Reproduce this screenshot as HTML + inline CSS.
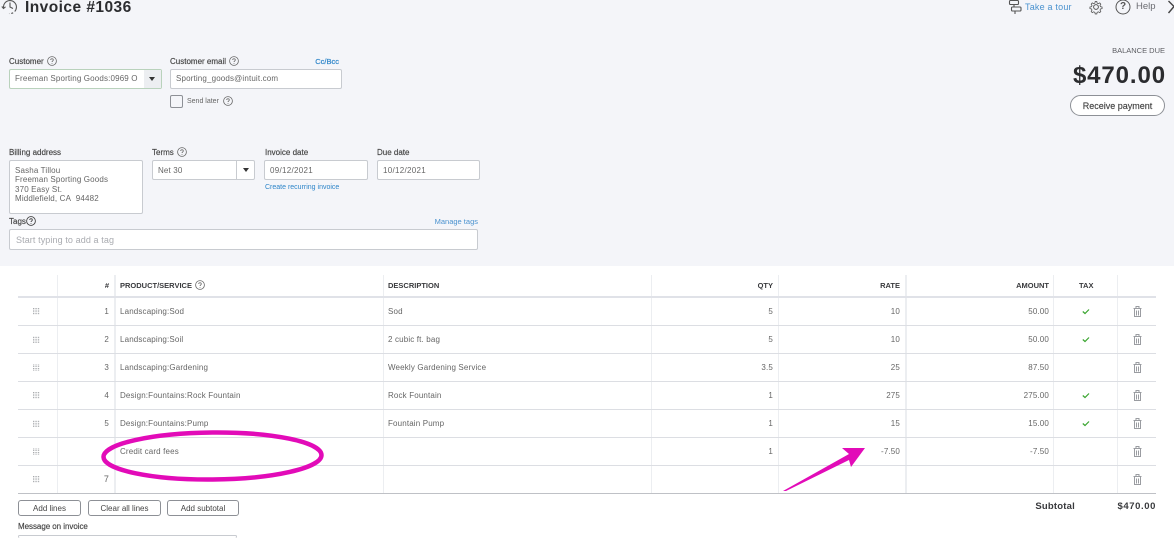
<!DOCTYPE html>
<html lang="en"><head><meta charset="utf-8"><title>Invoice #1036</title>
<style>
html,body{margin:0;padding:0;overflow:hidden;width:1174px;height:538px}
body{background:#fff;position:relative;font-family:"Liberation Sans",sans-serif;font-size:8px;color:#555}
#page{position:absolute;left:0;top:0;width:1174px;height:538px;overflow:hidden}
#top{position:absolute;left:0;top:0;width:1174px;height:266px;background:#f4f5f9}
.t{position:absolute;white-space:nowrap;line-height:10px;margin-top:1px}
.r{text-align:right}
.l{font-size:8px;color:#444;-webkit-text-stroke:.15px #444}
.h{font-size:7.5px;font-weight:bold;color:#393a3d}
.c{color:#666;font-size:8px;letter-spacing:.15px}
.b{color:#2d85c9}
.box{position:absolute;background:#fff;border:1px solid #c8cbd0;box-sizing:border-box;border-radius:2px}
.btn{position:absolute;top:500px;height:16px;background:#fff;border:1px solid #8d9096;box-sizing:border-box;border-radius:3px;text-align:center;line-height:15px;font-size:8px;color:#444}
.v{position:absolute;width:1px;top:275px;height:218px;background:#eceef1}
.hl{position:absolute;left:18px;width:1138px;height:1px;background:#dcdee3}
svg{position:absolute;overflow:visible}
</style></head><body>
<div id="page">
<div id="top"></div>

<svg style="left:1px;top:0" width="16" height="14" viewBox="0 0 16 14" fill="none" stroke="#555" stroke-width="1.1"><path d="M2.5 8A6.5 6.5 0 1 1 8 13.5" stroke-dasharray="26 2 2 2"/><path d="M9 2.5V7l3 1.5"/><path d="M.8 6.5 2.5 8.500 4.500 6.800"/></svg>
<div class="t" style="left:25px;top:-2px;font-size:15.5px;line-height:18px;font-weight:bold;color:#2b2c2f;letter-spacing:.45px">Invoice #1036</div>

<svg style="left:1008px;top:0" width="15" height="14" viewBox="0 0 15 14" fill="none" stroke="#555" stroke-width="1.1"><rect x="1.5" y=".5" width="9" height="4" rx="1"/><rect x="3.5" y="7" width="9.5" height="4" rx="1"/><path d="M6 4.500V7M7 11v3"/></svg>
<div class="t b" style="left:1025px;top:1px;font-size:9px;color:#4a92cf;letter-spacing:.2px">Take a tour</div>
<svg style="left:1088px;top:-1px" width="16" height="16" viewBox="0 0 16 16" fill="none" stroke="#555" stroke-width="1"><circle cx="8" cy="8" r="2.4"/><path d="M7 1.200h2l.4 2 1.500.7 1.800-1 1.300 1.500-1 1.700.6 1.400 2 .5v2l-2 .5-.6 1.400 1 1.700-1.300 1.400-1.800-1-1.500.7-.4 2H7l-.4-2-1.500-.7-1.800 1-1.300-1.400 1-1.700-.6-1.400-2-.5v-2l2-.5.6-1.400-1-1.700 1.300-1.500 1.800 1 1.500-.7z" transform="translate(1.600 1.600) scale(.8)"/></svg>
<svg style="left:1115px;top:-1px" width="16" height="16" viewBox="0 0 16 16" fill="none" stroke="#555" stroke-width="1"><circle cx="8" cy="8" r="7"/></svg>
<div class="t" style="left:1115px;top:1px;width:16px;text-align:center;font-size:10px;font-weight:bold;color:#555">?</div>
<div class="t" style="left:1136px;top:1px;font-size:9.5px;color:#6b6c72">Help</div>
<svg style="left:1168px;top:0" width="6" height="14" fill="none" stroke="#444" stroke-width="1.4"><path d="M.5 1 6 6.500.5 13"/></svg>

<div class="t l" style="left:9px;top:56px">Customer</div>
<svg style="left:47px;top:56px" width="10" height="10" fill="none" stroke="#666" stroke-width=".8"><circle cx="5" cy="5" r="4.400"/><path d="M3.700 4c0-1.700 2.600-1.700 2.600 0 0 1-1.300 1-1.300 2M5 7v.7"/></svg>
<div class="t l" style="left:170px;top:56px">Customer email</div>
<svg style="left:229px;top:56px" width="10" height="10" fill="none" stroke="#666" stroke-width=".8"><circle cx="5" cy="5" r="4.400"/><path d="M3.700 4c0-1.700 2.600-1.700 2.600 0 0 1-1.300 1-1.300 2M5 7v.7"/></svg>
<div class="t r b" style="right:835px;top:56px;font-size:7.5px;-webkit-text-stroke:.2px #2d85c9">Cc/Bcc</div>

<div class="box" style="left:9px;top:69px;width:153px;height:20px;border-color:#b9d2bc"></div>
<div style="position:absolute;left:144px;top:70px;width:17px;height:18px;background:#eceef1"></div>
<div class="t c" style="left:15px;top:73px">Freeman Sporting Goods:0969 O</div>
<svg style="left:149px;top:77px" width="6" height="4"><path d="M0 0h6L3 4z" fill="#333"/></svg>
<div class="box" style="left:170px;top:69px;width:172px;height:20px"></div>
<div class="t c" style="left:176px;top:73px">Sporting_goods@intuit.com</div>
<div class="box" style="left:170px;top:95px;width:13px;height:13px;background:#f4f5f9;border-color:#8d9096"></div>
<div class="t" style="left:187px;top:96px;font-size:7px;color:#666">Send later</div>
<svg style="left:223px;top:96px" width="10" height="10" fill="none" stroke="#666" stroke-width=".8"><circle cx="5" cy="5" r="4.400"/><path d="M3.700 4c0-1.700 2.600-1.700 2.600 0 0 1-1.300 1-1.300 2M5 7v.7"/></svg>

<div class="t r" style="right:9px;top:45px;font-size:7.5px;color:#5d5e63">BALANCE DUE</div>
<div class="t r" style="right:8px;top:61px;font-size:24px;line-height:27px;font-weight:bold;color:#2b2c2f;letter-spacing:.9px">$470.00</div>
<div style="position:absolute;left:1070px;top:95px;width:95px;height:21px;box-sizing:border-box;border:1px solid #8d9096;border-radius:11px;background:#fff;text-align:center;line-height:20px;font-size:9px;color:#444;-webkit-text-stroke:.15px #444">Receive payment</div>

<div class="t l" style="left:9px;top:147px">Billing address</div>
<div class="box" style="left:9px;top:160px;width:134px;height:54px"></div>
<div class="t c" style="left:15px;top:165px;line-height:9.3px">Sasha Tillou<br>Freeman Sporting Goods<br>370 Easy St.<br>Middlefield, CA&nbsp; 94482</div>
<div class="t l" style="left:152px;top:147px">Terms</div>
<svg style="left:177px;top:147px" width="10" height="10" fill="none" stroke="#666" stroke-width=".8"><circle cx="5" cy="5" r="4.400"/><path d="M3.700 4c0-1.700 2.600-1.700 2.600 0 0 1-1.300 1-1.300 2M5 7v.7"/></svg>
<div class="box" style="left:152px;top:160px;width:103px;height:20px"></div>
<div style="position:absolute;left:236px;top:161px;width:1px;height:18px;background:#c8cbd0"></div>
<div class="t c" style="left:158px;top:165px">Net 30</div>
<svg style="left:243px;top:168px" width="6" height="4"><path d="M0 0h6L3 4z" fill="#333"/></svg>
<div class="t l" style="left:265px;top:147px">Invoice date</div>
<div class="box" style="left:264px;top:160px;width:104px;height:20px"></div>
<div class="t c" style="left:270px;top:165px;letter-spacing:.3px">09/12/2021</div>
<div class="t b" style="left:265px;top:182px;font-size:7px">Create recurring invoice</div>
<div class="t l" style="left:377px;top:147px">Due date</div>
<div class="box" style="left:377px;top:160px;width:103px;height:20px"></div>
<div class="t c" style="left:383px;top:165px;letter-spacing:.3px">10/12/2021</div>
<div class="t l" style="left:9px;top:216px">Tags</div>
<svg style="left:26px;top:216px" width="10" height="10" fill="none" stroke="#444" stroke-width=".9"><circle cx="5" cy="5" r="4.400"/><path d="M3.700 4c0-1.700 2.600-1.700 2.600 0 0 1-1.300 1-1.300 2M5 7v.7"/></svg>
<div class="t r b" style="right:696px;top:216px;font-size:7.5px;color:#4a92cf">Manage tags</div>
<div class="box" style="left:9px;top:229px;width:469px;height:21px"></div>
<div class="t" style="left:16px;top:234px;font-size:9px;letter-spacing:.1px;color:#a9abb0">Start typing to add a tag</div>

<div class="v" style="left:57px"></div><div class="v" style="left:114px;width:2px"></div><div class="v" style="left:383px"></div><div class="v" style="left:651px"></div><div class="v" style="left:778px"></div><div class="v" style="left:905px;width:2px"></div><div class="v" style="left:1053px"></div><div class="v" style="left:1117px"></div>
<div class="hl" style="top:296px;height:2px;background:#e0e2e8"></div>
<div class="hl" style="top:325px"></div><div class="hl" style="top:353px"></div><div class="hl" style="top:381px"></div><div class="hl" style="top:409px"></div><div class="hl" style="top:437px"></div><div class="hl" style="top:465px"></div>
<div class="hl" style="top:493px;background:#bfc1c6"></div>

<div class="t h r" style="right:1065px;top:280px">#</div>
<div class="t h" style="left:120px;top:280px">PRODUCT/SERVICE</div>
<svg style="left:195px;top:280px" width="10" height="10" fill="none" stroke="#666" stroke-width=".8"><circle cx="5" cy="5" r="4.400"/><path d="M3.700 4c0-1.700 2.600-1.700 2.600 0 0 1-1.300 1-1.300 2M5 7v.7"/></svg>
<div class="t h" style="left:388px;top:280px">DESCRIPTION</div>
<div class="t h r" style="right:401px;top:280px">QTY</div>
<div class="t h r" style="right:274px;top:280px">RATE</div>
<div class="t h r" style="right:125px;top:280px">AMOUNT</div>
<div class="t h" style="left:1079px;top:280px">TAX</div>

<svg style="left:33px;top:308px" width="7" height="174" fill="#a5a7ab"><defs><pattern id="g" width="2.400" height="2.400" patternUnits="userSpaceOnUse"><rect width="1.300" height="1.300"/></pattern></defs><rect width="7" height="7" fill="url(#g)"/><rect y="28" width="7" height="7" fill="url(#g)"/><rect y="56" width="7" height="7" fill="url(#g)"/><rect y="84" width="7" height="7" fill="url(#g)"/><rect y="112" width="7" height="7" fill="url(#g)"/><rect y="140" width="7" height="7" fill="url(#g)"/><rect y="168" width="7" height="7" fill="url(#g)"/></svg>

<div class="t c r" style="right:1065px;top:306px">1</div><div class="t c" style="left:120px;top:306px">Landscaping:Sod</div><div class="t c" style="left:388px;top:306px">Sod</div><div class="t c r" style="right:401px;top:306px">5</div><div class="t c r" style="right:274px;top:306px">10</div><div class="t c r" style="right:125px;top:306px">50.00</div>
<div class="t c r" style="right:1065px;top:334px">2</div><div class="t c" style="left:120px;top:334px">Landscaping:Soil</div><div class="t c" style="left:388px;top:334px">2 cubic ft. bag</div><div class="t c r" style="right:401px;top:334px">5</div><div class="t c r" style="right:274px;top:334px">10</div><div class="t c r" style="right:125px;top:334px">50.00</div>
<div class="t c r" style="right:1065px;top:362px">3</div><div class="t c" style="left:120px;top:362px">Landscaping:Gardening</div><div class="t c" style="left:388px;top:362px">Weekly Gardening Service</div><div class="t c r" style="right:401px;top:362px">3.5</div><div class="t c r" style="right:274px;top:362px">25</div><div class="t c r" style="right:125px;top:362px">87.50</div>
<div class="t c r" style="right:1065px;top:390px">4</div><div class="t c" style="left:120px;top:390px">Design:Fountains:Rock Fountain</div><div class="t c" style="left:388px;top:390px">Rock Fountain</div><div class="t c r" style="right:401px;top:390px">1</div><div class="t c r" style="right:274px;top:390px">275</div><div class="t c r" style="right:125px;top:390px">275.00</div>
<div class="t c r" style="right:1065px;top:418px">5</div><div class="t c" style="left:120px;top:418px">Design:Fountains:Pump</div><div class="t c" style="left:388px;top:418px">Fountain Pump</div><div class="t c r" style="right:401px;top:418px">1</div><div class="t c r" style="right:274px;top:418px">15</div><div class="t c r" style="right:125px;top:418px">15.00</div>
<div class="t c" style="left:120px;top:446px">Credit card fees</div><div class="t c r" style="right:401px;top:446px">1</div><div class="t c r" style="right:274px;top:446px">-7.50</div><div class="t c r" style="right:125px;top:446px">-7.50</div>
<div class="t c r" style="right:1065px;top:473px;font-size:9px">7</div>

<svg style="left:1082px;top:308px" width="8" height="120" fill="none" stroke="#3aa52f" stroke-width="1.2"><path d="M.8 3.500 3 5.500 7 1.500"/><path d="M.8 31.500 3 33.500 7 29.500"/><path d="M.8 87.500 3 89.500 7 85.500"/><path d="M.8 115.500 3 117.500 7 113.500"/></svg>

<svg style="left:1133px;top:306px" width="10" height="176" fill="none" stroke="#9a9ca1" stroke-width="1"><path d="M.5 2.500h8M3 2.500V.5h3v2M1.500 2.500v8h6v-8M3.500 4.500v5M5.500 4.500v5"/><path transform="translate(0 28)" d="M.5 2.500h8M3 2.500V.5h3v2M1.500 2.500v8h6v-8M3.500 4.500v5M5.500 4.500v5"/><path transform="translate(0 56)" d="M.5 2.500h8M3 2.500V.5h3v2M1.500 2.500v8h6v-8M3.500 4.500v5M5.500 4.500v5"/><path transform="translate(0 84)" d="M.5 2.500h8M3 2.500V.5h3v2M1.500 2.500v8h6v-8M3.500 4.500v5M5.500 4.500v5"/><path transform="translate(0 112)" d="M.5 2.500h8M3 2.500V.5h3v2M1.500 2.500v8h6v-8M3.500 4.500v5M5.500 4.500v5"/><path transform="translate(0 140)" d="M.5 2.500h8M3 2.500V.5h3v2M1.500 2.500v8h6v-8M3.500 4.500v5M5.500 4.500v5"/><path transform="translate(0 168)" d="M.5 2.500h8M3 2.500V.5h3v2M1.500 2.500v8h6v-8M3.500 4.500v5M5.500 4.500v5"/></svg>

<div class="btn" style="left:18px;width:63px">Add lines</div>
<div class="btn" style="left:88px;width:73px">Clear all lines</div>
<div class="btn" style="left:167px;width:72px">Add subtotal</div>
<div class="t r" style="right:99px;top:501px;font-size:9.5px;font-weight:bold;color:#393a3d;letter-spacing:.2px">Subtotal</div>
<div class="t r" style="right:18px;top:501px;font-size:9.5px;font-weight:bold;color:#393a3d;letter-spacing:.6px">$470.00</div>
<div class="t l" style="left:18px;top:521px;letter-spacing:-.05px">Message on invoice</div>
<div class="box" style="left:18px;top:535px;width:219px;height:3px;border-bottom:0"></div>

<svg style="left:0;top:0" width="1174" height="538"><ellipse cx="212.500" cy="456" rx="109" ry="23.500" fill="none" stroke="#e20bb8" stroke-width="4.500" transform="rotate(-.5 212 456)"/><path d="M783 491 849 454 842 448 865 448 851 467 849 460 786 491z" fill="#e20bb8"/></svg>
</div>
</body></html>
